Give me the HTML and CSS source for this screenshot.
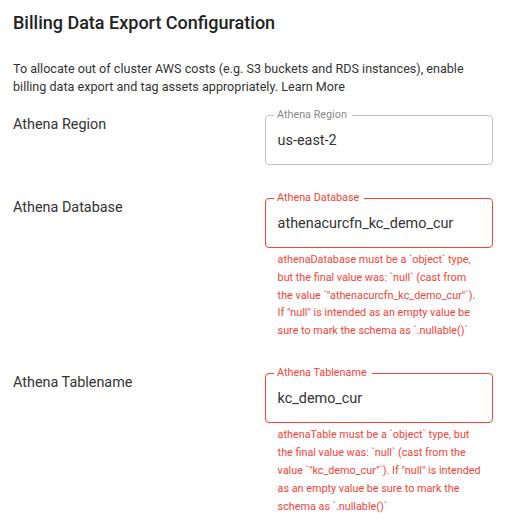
FILE: index.html
```html
<!DOCTYPE html>
<html lang="en">
<head>
<meta charset="utf-8">
<title>Billing Data Export Configuration</title>
<link rel="stylesheet" href="styles.css">
</head>
<body>
<div class="page">
  <h1 class="title">Billing Data Export Configuration</h1>
  <p class="desc">To allocate out of cluster AWS costs (e.g. S3 buckets and RDS instances), enable billing data export and tag assets appropriately. <span class="link">Learn More</span></p>
  <div class="form">
    <div class="row">
      <div class="label">Athena Region</div>
      <div class="control">
        <div class="field">
          <span class="legend">Athena Region</span>
          <span class="value">us-east-2</span>
        </div>
      </div>
    </div>
    <div class="row">
      <div class="label">Athena Database</div>
      <div class="control">
        <div class="field error">
          <span class="legend">Athena Database</span>
          <span class="value">athenacurcfn_kc_demo_cur</span>
        </div>
        <p class="helper">athenaDatabase must be a `object` type, but the final value was: `null` (cast from the value `"athenacurcfn_kc_demo_cur"`). If "null" is intended as an empty value be sure to mark the schema as `.nullable()`</p>
      </div>
    </div>
    <div class="row">
      <div class="label">Athena Tablename</div>
      <div class="control">
        <div class="field error">
          <span class="legend">Athena Tablename</span>
          <span class="value">kc_demo_cur</span>
        </div>
        <p class="helper">athenaTable must be a `object` type, but the final value was: `null` (cast from the value `"kc_demo_cur"`). If "null" is intended as an empty value be sure to mark the schema as `.nullable()`</p>
      </div>
    </div>
  </div>
</div>
</body>
</html>
```

FILE: styles.css
```css
* { box-sizing: border-box; }
html, body { margin: 0; padding: 0; background: #ffffff; }
body {
  font-family: Roboto, "Liberation Sans", Arial, sans-serif;
  color: #333333;
}
.page {
  padding: 11px 12px 0 13px;
}
.title {
  margin: 0;
  font-size: 18px;
  line-height: 24px;
  font-weight: 500;
  color: #222222;
}
.desc {
  margin: 25px 0 0 0;
  font-size: 12.6px;
  line-height: 18px;
  color: #333333;
}
.form {
  margin-top: 19px;
  display: flex;
  flex-direction: column;
  gap: 33px;
}
.row {
  display: grid;
  grid-template-columns: 1fr 228px;
  align-items: start;
}
.label {
  font-size: 14.4px;
  line-height: 20px;
  color: #333333;
}
.field {
  position: relative;
  height: 50px;
  border: 1px solid #c4c4c4;
  border-radius: 4px;
  padding: 0 11.6px;
  display: flex;
  align-items: center;
}
.field.error { border-color: #f44336; }
.legend {
  position: absolute;
  top: -8px;
  left: 8px;
  padding: 0 5px 0 3px;
  background: #ffffff;
  font-size: 10.8px;
  line-height: 13px;
  color: #888888;
}
.field.error .legend { color: #f44336; }
.value {
  font-size: 14.4px;
  line-height: 20px;
  color: #333333;
  padding-top: 2px;
}
.helper {
  margin: 2.7px 10px 0 12.6px;
  font-size: 10.8px;
  line-height: 17.9px;
  color: #f44336;
}
```
